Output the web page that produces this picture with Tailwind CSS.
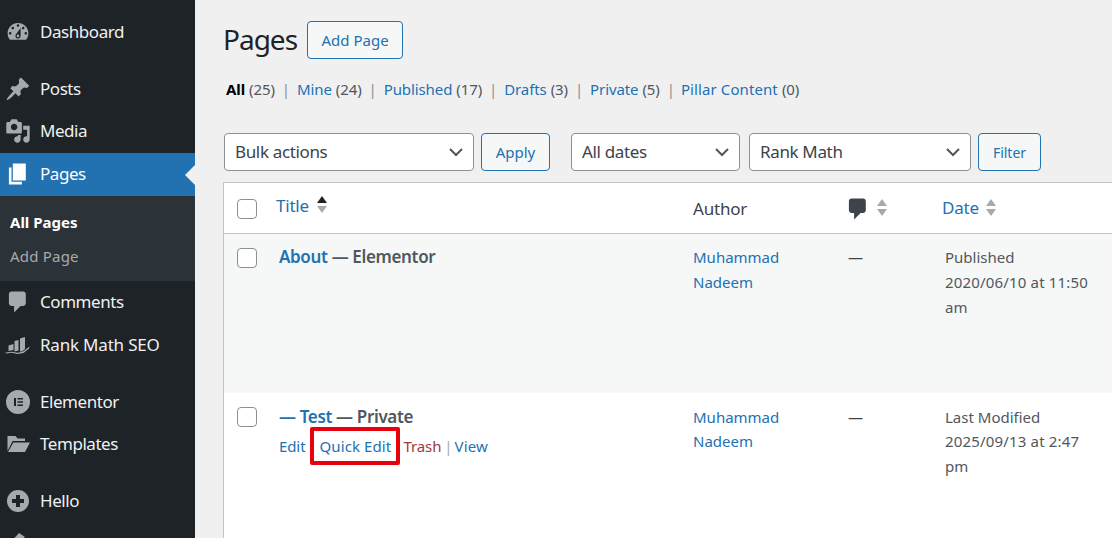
<!DOCTYPE html>
<html lang="en">
<head>
<meta charset="utf-8">
<title>Pages</title>
<script src="https://cdn.jsdelivr.net/npm/@tailwindcss/browser@4"></script>
</head>
<body class="m-0">
<div class="flex h-[538px] w-[1112px] overflow-hidden bg-[#f0f0f1] font-['Noto_Sans',sans-serif] text-[#3c434a]">
  <!-- Sidebar -->
  <nav class="w-[195px] shrink-0 bg-[#1d2327] pt-[11px] text-[17px] tracking-[-0.45px] text-[#f0f0f1]">
    <div class="flex h-[42px] items-center pb-[1px]"><span class="flex w-[40px] justify-center pl-[1px] pr-[5px]"><svg class="h-[26px] w-[26px] fill-[#a7aaad]" viewBox="0 0 20 20"><path d="M3.76 16h12.48c1.1-1.37 1.76-3.11 1.76-5 0-4.42-3.58-8-8-8s-8 3.58-8 8c0 1.89.66 3.63 1.76 5zM10 4c.55 0 1 .45 1 1s-.45 1-1 1-1-.45-1-1 .45-1 1-1zM6 6c.55 0 1 .45 1 1s-.45 1-1 1-1-.45-1-1 .45-1 1-1zm8 0c.55 0 1 .45 1 1s-.45 1-1 1-1-.45-1-1 .45-1 1-1zm-5.37 5.55L12 7v6c0 1.1-.9 2-2 2s-2-.9-2-2c0-.57.24-1.08.63-1.45zM4 10c.55 0 1 .45 1 1s-.45 1-1 1-1-.45-1-1 .45-1 1-1zm12 0c.55 0 1 .45 1 1s-.45 1-1 1-1-.45-1-1 .45-1 1-1zm-5 3c0-.55-.45-1-1-1s-1 .45-1 1 .45 1 1 1 1-.45 1-1z" fill-rule="evenodd"/></svg></span>Dashboard</div>
    <div class="mt-[15px] flex h-[42px] items-center"><span class="flex w-[40px] justify-center pr-[5px]"><svg class="h-[26px] w-[26px] fill-[#a7aaad]" viewBox="0 0 20 20"><path d="M10.44 3.02l1.82-1.82 6.36 6.35-1.83 1.82c-1.05-.68-2.48-.57-3.41.36l-.75.75c-.92.93-1.04 2.35-.35 3.41l-1.83 1.82-2.41-2.41-2.8 2.79c-.42.42-3.38 2.71-3.8 2.29s1.86-3.39 2.28-3.81l2.79-2.79L4.1 9.36l1.83-1.82c1.05.69 2.48.57 3.4-.36l.75-.75c.93-.92 1.05-2.35.36-3.41z"/></svg></span>Posts</div>
    <div class="flex h-[43px] items-center pb-[1px]"><span class="flex w-[40px] justify-center pr-[5px]"><svg class="h-[26px] w-[26px] fill-[#a7aaad]" viewBox="0 0 20 20"><path fill-rule="evenodd" d="M13 11V4c0-.55-.45-1-1-1h-1.67L9 1H5L3.67 3H2c-.55 0-1 .45-1 1v7c0 .55.45 1 1 1h10c.55 0 1-.45 1-1zM7 4.5c1.38 0 2.5 1.12 2.5 2.5S8.38 9.5 7 9.5 4.5 8.38 4.5 7 5.62 4.5 7 4.5zM14 6h5v10.5c0 1.38-1.12 2.5-2.5 2.5S14 17.88 14 16.5s1.12-2.5 2.5-2.5c.17 0 .34.02.5.05V9h-3V6zm-4 8.05V13h2v3.5c0 1.38-1.12 2.5-2.5 2.5S7 17.88 7 16.5 8.12 14 9.5 14c.17 0 .34.02.5.05z"/></svg></span>Media</div>
    <div class="relative flex h-[43px] items-center bg-[#2271b1] pb-[1px] text-white"><span class="flex w-[40px] justify-center pr-[5px]"><svg class="h-[26px] w-[26px] fill-white" viewBox="0 0 20 20"><path d="M6 15V2h10v13H6zm-1 1h8v2H3V5h2v11z"/></svg></span>Pages<span class="absolute right-0 top-[12px] border-y-[10px] border-r-[10px] border-y-transparent border-r-[#f0f0f1]"></span></div>
    <div class="h-[85px] bg-[#2c3338] pt-[11px] text-[15px] tracking-normal">
      <div class="flex h-[30px] items-center pl-[10px] font-bold text-white">All Pages</div>
      <div class="mt-[4px] flex h-[30px] items-center pl-[10px] tracking-[0.2px] text-[#a7aaad]">Add Page</div>
    </div>
    <div class="flex h-[43px] items-center pb-[1px]"><span class="flex w-[40px] justify-center pr-[5px]"><svg class="h-[26px] w-[26px] fill-[#a7aaad]" viewBox="0 0 20 20"><path d="M5 2h9c1.1 0 2 .9 2 2v7c0 1.1-.9 2-2 2h-2l-5 5v-5H5c-1.1 0-2-.9-2-2V4c0-1.1.9-2 2-2z"/></svg></span>Comments</div>
    <div class="flex h-[43px] items-center pb-[1px] tracking-[-0.2px]"><span class="flex w-[40px] justify-center pr-[5px]"><svg class="h-[26px] w-[26px] fill-[#a7aaad]" viewBox="0 0 26 26"><path d="M3.500 13.500l5-1.500v6l-5 1zM9.500 9l4-1v10.500l-4 1zM15 6.500l5-1.500v12l-2.500 2-2.500.5zM.5 20.500l6-.8 6.500 1 5.500-1.500 6-4.700-.5 2-5.500 4.500-6 1-6-1.300-5.500.8z"/></svg></span>Rank Math SEO</div>
    <div class="mt-[14px] flex h-[42px] items-center pb-[1px]"><span class="flex w-[40px] justify-center pr-[5px]"><svg class="h-[24px] w-[24px] fill-[#a7aaad]" viewBox="0 0 24 24"><path fill-rule="evenodd" d="M12 0a12 12 0 1 0 0 24 12 12 0 0 0 0-24zM8 8h2v8H8zM11.500 8H17v1.600h-5.500zM11.500 11.200H17v1.600h-5.500zM11.500 14.400H17V16h-5.500z"/></svg></span>Elementor</div>
    <div class="flex h-[43px] items-center pb-[1px]"><span class="flex w-[40px] justify-center pr-[5px]"><svg class="h-[24px] w-[24px] fill-[#a7aaad]" viewBox="0 0 24 24"><path d="M1.500 19V4h8l2 2.500h7.500v2.500H6.500zM2 20l5.300-9.500H24l-5 9.500z"/></svg></span>Templates</div>
    <div class="mt-[14px] flex h-[43px] items-center pb-[1px]"><span class="flex w-[40px] justify-center pr-[5px]"><svg class="h-[24px] w-[24px] fill-[#a7aaad]" viewBox="0 0 24 24"><path fill-rule="evenodd" d="M12 1a11 11 0 1 0 0 22 11 11 0 0 0 0-22zm-2 5h4v4h4v4h-4v4h-4v-4H6v-4h4z"/></svg></span>Hello</div>
    <div class="mt-[10px] flex h-[24px] justify-start pl-[7px]"><svg class="h-[24px] w-[24px] fill-[#a7aaad]" viewBox="0 0 24 24"><path d="M12 0l6 4-14 10-3-2z"/></svg></div>
  </nav>

  <!-- Main -->
  <main class="min-w-0 flex-1 pl-[28px]">
    <div class="flex h-[59px] items-end">
      <h1 class="pb-[1px] text-[28px] font-normal leading-[37px] tracking-[-1px] text-[#1d2327]">Pages</h1>
      <a class="ml-[10px] flex h-[38px] w-[96px] items-center justify-center rounded-[4px] border border-[#2271b1] bg-[#f6f7f7] text-[15px] text-[#2271b1]">Add Page</a>
    </div>
    <div class="mt-[19px] flex h-[22px] items-center gap-[7px] pl-[3px] text-[15px] tracking-[-0.1px] text-[#50575e]">
      <span class="font-bold text-black">All</span><span class="-ml-[3px]">(25)</span><span class="text-[#8c8f94]">|</span>
      <a class="text-[#2271b1]">Mine</a><span class="-ml-[3px]">(24)</span><span class="text-[#8c8f94]">|</span>
      <a class="text-[#2271b1]">Published</a><span class="-ml-[3px]">(17)</span><span class="text-[#8c8f94]">|</span>
      <a class="text-[#2271b1]">Drafts</a><span class="-ml-[3px]">(3)</span><span class="text-[#8c8f94]">|</span>
      <a class="text-[#2271b1]">Private</a><span class="-ml-[3px]">(5)</span><span class="text-[#8c8f94]">|</span>
      <a class="-ml-[1px] tracking-[0.1px] text-[#2271b1]">Pillar Content</a><span class="-ml-[3px]">(0)</span>
    </div>
    <div class="mt-[33px] flex h-[38px] pl-[1px] text-[17px] tracking-[-0.35px]">
      <div class="flex w-[250px] items-center justify-between rounded-[4px] border border-[#8c8f94] bg-white pl-[10px] pr-[9px]">Bulk actions<svg class="h-[14px] w-[16px] fill-none stroke-[#50575e] stroke-2" viewBox="0 0 16 14"><path d="M2 4l6 6 6-6"/></svg></div>
      <a class="ml-[7px] flex w-[69px] items-center justify-center rounded-[4px] border border-[#2271b1] bg-[#f6f7f7] text-[15px] tracking-normal text-[#2271b1]">Apply</a>
      <div class="ml-[21px] flex w-[169px] items-center justify-between rounded-[4px] border border-[#8c8f94] bg-white pl-[10px] pr-[9px]">All dates<svg class="h-[14px] w-[16px] fill-none stroke-[#50575e] stroke-2" viewBox="0 0 16 14"><path d="M2 4l6 6 6-6"/></svg></div>
      <div class="ml-[9px] flex w-[222px] items-center justify-between rounded-[4px] border border-[#8c8f94] bg-white pl-[10px] pr-[9px]">Rank Math<svg class="h-[14px] w-[16px] fill-none stroke-[#50575e] stroke-2" viewBox="0 0 16 14"><path d="M2 4l6 6 6-6"/></svg></div>
      <a class="ml-[7px] flex w-[63px] items-center justify-center rounded-[4px] border border-[#2271b1] bg-[#f6f7f7] text-[14px] tracking-normal text-[#2271b1]">Filter</a>
    </div>
    <!-- Table -->
    <div class="mt-[11px] h-[400px] w-[890px] border-l border-t border-[#c3c4c7] bg-white">
      <div class="flex h-[51px] border-b border-[#c3c4c7] text-[17px] tracking-[-0.2px]">
        <div class="w-[52px] pl-[13px] pt-[16px]"><span class="block h-[20px] w-[20px] rounded-[4px] border border-[#8c8f94] bg-white"></span></div>
        <div class="flex w-[417px] items-start pt-[10px] text-[#2271b1]">Title<svg class="ml-[7px] mt-[2px] h-[20px] w-[12px]" viewBox="0 0 12 20"><path class="fill-[#1d2327]" d="M1 8l5-7 5 7z"/><path class="fill-[#a7aaad]" d="M1 11h10l-5 7z"/></svg></div>
        <div class="flex w-[155px] items-center pt-[1px]">Author</div>
        <div class="flex w-[94px] items-center"><svg class="-ml-[3px] mt-[2px] h-[26px] w-[26px] fill-[#3c434a]" viewBox="0 0 20 20"><path d="M5 2h9c1.100 0 2 .9 2 2v7c0 1.100-.9 2-2 2h-2l-5 5v-5H5c-1.100 0-2-.9-2-2V4c0-1.100.9-2 2-2z"/></svg><svg class="ml-[5px] h-[20px] w-[12px] fill-[#a7aaad]" viewBox="0 0 12 20"><path d="M1 8l5-7 5 7zM1 11h10l-5 7z"/></svg></div>
        <div class="flex items-center text-[#2271b1]">Date<svg class="ml-[6px] h-[20px] w-[12px] fill-[#a7aaad]" viewBox="0 0 12 20"><path d="M1 8l5-7 5 7zM1 11h10l-5 7z"/></svg></div>
      </div>
      <div class="flex h-[159px] bg-[#f6f7f7] text-[15px] leading-[25px]">
        <div class="w-[52px] pl-[13px] pt-[14px]"><span class="block h-[20px] w-[20px] rounded-[4px] border border-[#8c8f94] bg-white"></span></div>
        <div class="w-[417px] pl-[3px] pt-[10px] text-[17px] font-semibold tracking-[-0.35px] text-[#50575e]"><a class="text-[#2271b1]">About</a> — Elementor</div>
        <div class="w-[155px] pt-[11px] text-[#2271b1]">Muhammad<br>Nadeem</div>
        <div class="w-[97px] pt-[11px]">—</div>
        <div class="pt-[11px] text-[#50575e]">Published<br><span class="tracking-[0.17px]">2020/06/10 at 11:50</span><br>am</div>
      </div>
      <div class="flex bg-white text-[15px] leading-[24.3px]">
        <div class="w-[52px] pl-[13px] pt-[14px]"><span class="block h-[20px] w-[20px] rounded-[4px] border border-[#8c8f94] bg-white"></span></div>
        <div class="w-[417px] pl-[3px] pt-[11px]">
          <div class="text-[17px] font-semibold leading-[25px] tracking-[-0.35px] text-[#50575e]"><a class="text-[#2271b1]">— Test</a> — Private</div>
          <div class="-mt-[2px] flex items-center text-[15px] tracking-[-0.1px]">
            <a class="text-[#2271b1]">Edit</a>
            <span class="ml-[5px] flex h-[38px] w-[90px] items-center justify-center rounded-[2px] border-[4px] border-[#e8000d] pt-[1px] tracking-[0.1px] text-[#2271b1]">Quick Edit</span>
            <a class="ml-[3px] text-[#a03a3a]">Trash</a><span class="ml-[3px] mr-[2px] text-[#a7aaad]">|</span><a class="tracking-[0.2px] text-[#2271b1]">View</a>
          </div>
        </div>
        <div class="w-[155px] pt-[12px] text-[#2271b1]">Muhammad<br>Nadeem</div>
        <div class="w-[97px] pt-[12px]">—</div>
        <div class="pt-[12px] text-[#50575e]">Last Modified<br><span class="tracking-[0.17px]">2025/09/13 at 2:47</span><br>pm</div>
      </div>
    </div>
  </main>
</div>
</body>
</html>
